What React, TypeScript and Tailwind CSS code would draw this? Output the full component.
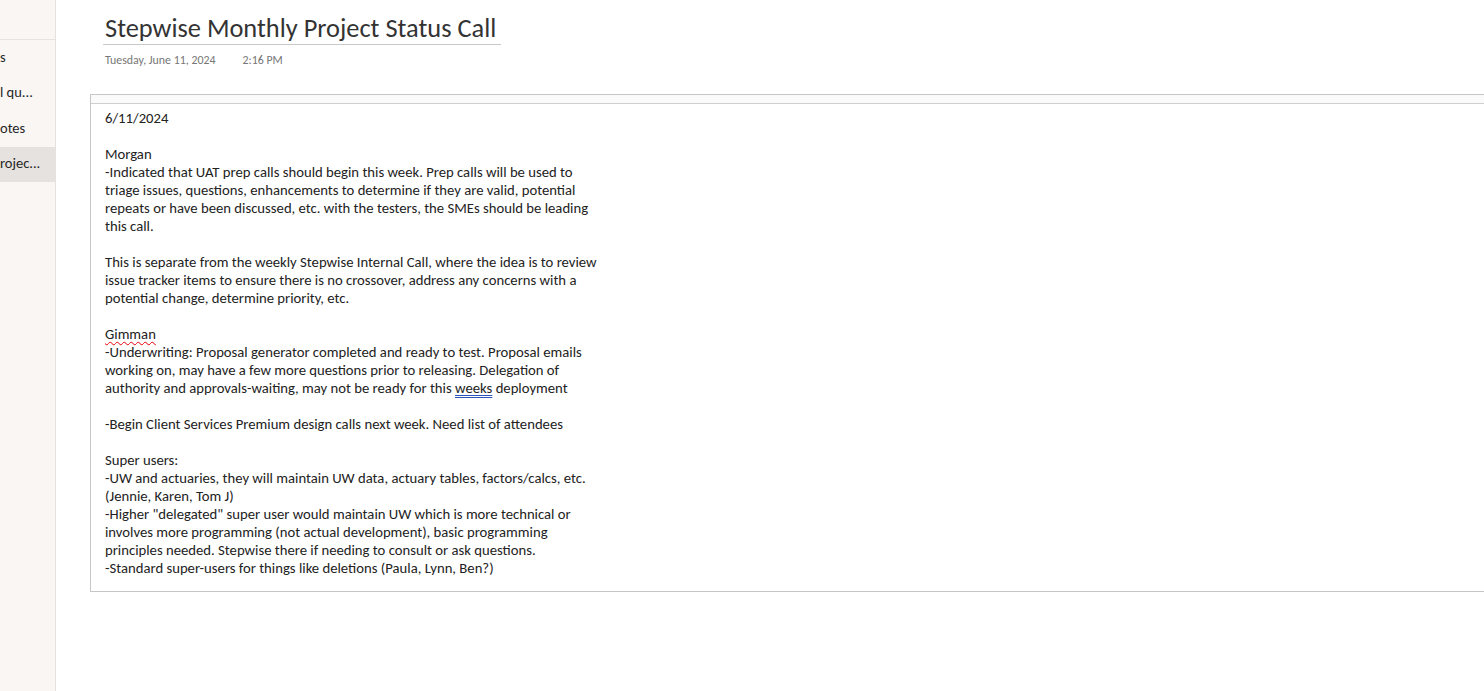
import React from 'react'

const sections = ['s', 'l qu...', 'otes', 'rojec...']

const Line = ({ children }: { children?: React.ReactNode }) => (
  <div className="h-[18px] whitespace-nowrap leading-[18px]">{children ?? '\u00a0'}</div>
)

const App = () => {
  return (
    <div
      className="flex h-[691px] w-[1484px] overflow-hidden bg-white text-[#1e1e1e]"
      style={{ fontFamily: 'Calibri, Carlito, Lato, "Liberation Sans", sans-serif' }}
    >
      {/* section list, mostly scrolled off to the left */}
      <aside className="flex w-[56px] shrink-0 flex-col border-r border-[#e4e1de] bg-[#f9f6f4]">
        <div className="h-[40px] border-b border-[#e6e3e0]" />
        {sections.map((label, i) => (
          <div
            key={label}
            className={`flex h-[35.5px] items-center whitespace-nowrap text-[14.5px] text-[#262626] ${
              i === 3 ? 'bg-[#e5e2df]' : ''
            }`}
          >
            {label}
          </div>
        ))}
      </aside>

      {/* page */}
      <main className="flex min-w-0 flex-1 flex-col pl-[34px]">
        <div className="pl-[13px] pt-[13px]">
          <div className="w-[398px] border-b border-[#c9c9c9] pb-[1px] pl-[2px]">
            <h1 className="text-[26.4px] font-light leading-[30px] text-[#333]">
              Stepwise Monthly Project Status Call
            </h1>
          </div>
          <div className="mt-[8px] flex gap-[27px] pl-[2px] text-[11.9px] leading-[14px] text-[#767676]">
            <span>Tuesday, June 11, 2024</span>
            <span>2:16 PM</span>
          </div>
        </div>

        {/* note container */}
        <div className="mt-[27px] w-[1420px] border border-[#c6c6c6]">
          <div className="h-[9px] border-b border-[#cfcfcf] bg-[#fafafa]" />
          <div className="pb-[14px] pl-[14px] pt-[5px] text-[14.7px] text-[#222]">
            <Line>6/11/2024</Line>
            <Line />
            <Line>Morgan</Line>
            <Line>-Indicated that UAT prep calls should begin this week. Prep calls will be used to</Line>
            <Line>triage issues, questions, enhancements to determine if they are valid, potential</Line>
            <Line>repeats or have been discussed, etc. with the testers, the SMEs should be leading</Line>
            <Line>this call.</Line>
            <Line />
            <Line>This is separate from the weekly Stepwise Internal Call, where the idea is to review</Line>
            <Line>issue tracker items to ensure there is no crossover, address any concerns with a</Line>
            <Line>potential change, determine priority, etc.</Line>
            <Line />
            <Line>
              <span className="underline decoration-red-600 decoration-wavy decoration-1 underline-offset-2">Gimman</span>
            </Line>
            <Line>-Underwriting: Proposal generator completed and ready to test. Proposal emails</Line>
            <Line>working on, may have a few more questions prior to releasing. Delegation of</Line>
            <Line>
              authority and approvals-waiting, may not be ready for this{' '}
              <span className="underline decoration-[#2b55b8] decoration-double decoration-1 underline-offset-2">weeks</span>{' '}
              deployment
            </Line>
            <Line />
            <Line>-Begin Client Services Premium design calls next week. Need list of attendees</Line>
            <Line />
            <Line>Super users:</Line>
            <Line>-UW and actuaries, they will maintain UW data, actuary tables, factors/calcs, etc.</Line>
            <Line>(Jennie, Karen, Tom J)</Line>
            <Line>-Higher "delegated" super user would maintain UW which is more technical or</Line>
            <Line>involves more programming (not actual development), basic programming</Line>
            <Line>principles needed. Stepwise there if needing to consult or ask questions.</Line>
            <Line>-Standard super-users for things like deletions (Paula, Lynn, Ben?)</Line>
          </div>
        </div>
      </main>
    </div>
  )
}

export default App
